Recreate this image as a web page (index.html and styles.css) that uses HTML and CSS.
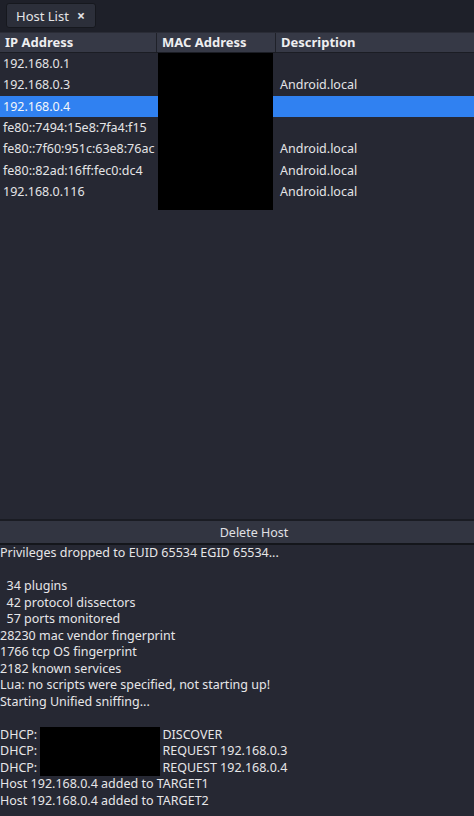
FILE: index.html
```html
<!DOCTYPE html>
<html>
<head>
<meta charset="utf-8">
<link rel="stylesheet" href="styles.css">
</head>
<body>
<div class="app">
  <div class="topbar">
    <div class="tab"><span class="tab-label">Host List</span><span class="tab-close">×</span></div>
  </div>
  <div class="table">
    <div class="thead">
      <div class="th c1">IP Address</div>
      <div class="th c2">MAC Address</div>
      <div class="th c3">Description</div>
    </div>
    <div class="tbody">
      <div class="row"><div class="td c1">192.168.0.1</div><div class="td c2"></div><div class="td c3"></div></div>
      <div class="row"><div class="td c1">192.168.0.3</div><div class="td c2"></div><div class="td c3">Android.local</div></div>
      <div class="row sel"><div class="td c1">192.168.0.4</div><div class="td c2"></div><div class="td c3"></div></div>
      <div class="row"><div class="td c1">fe80::7494:15e8:7fa4:f15</div><div class="td c2"></div><div class="td c3"></div></div>
      <div class="row"><div class="td c1">fe80::7f60:951c:63e8:76ac</div><div class="td c2"></div><div class="td c3">Android.local</div></div>
      <div class="row"><div class="td c1">fe80::82ad:16ff:fec0:dc4</div><div class="td c2"></div><div class="td c3">Android.local</div></div>
      <div class="row"><div class="td c1">192.168.0.116</div><div class="td c2"></div><div class="td c3">Android.local</div></div>
      <div class="redact-mac"></div>
    </div>
  </div>
  <div class="actionbar"><span>Delete Host</span></div>
  <div class="log">
    <div class="log-inner">
<div class="line">Privileges dropped to EUID 65534 EGID 65534...</div>
<div class="line">&nbsp;</div>
<div class="line">  34 plugins</div>
<div class="line">  42 protocol dissectors</div>
<div class="line">  57 ports monitored</div>
<div class="line">28230 mac vendor fingerprint</div>
<div class="line">1766 tcp OS fingerprint</div>
<div class="line">2182 known services</div>
<div class="line">Lua: no scripts were specified, not starting up!</div>
<div class="line">Starting Unified sniffing...</div>
<div class="line">&nbsp;</div>
<div class="line">DHCP: <span class="redact"></span>DISCOVER</div>
<div class="line">DHCP: <span class="redact"></span>REQUEST 192.168.0.3</div>
<div class="line">DHCP: <span class="redact"></span>REQUEST 192.168.0.4</div>
<div class="line">Host 192.168.0.4 added to TARGET1</div>
<div class="line">Host 192.168.0.4 added to TARGET2</div>
    </div>
  </div>
</div>
</body>
</html>
```

FILE: styles.css
```css
html, body {
  margin: 0;
  padding: 0;
  background: #262833;
}
body {
  font-family: "Noto Sans", "Open Sans", sans-serif;
  font-size: 12.5px;
  color: #e4e4e6;
}
.app {
  width: 474px;
  height: 816px;
  display: flex;
  flex-direction: column;
  overflow: hidden;
}
.topbar {
  height: 32px;
  box-sizing: border-box;
  background: #1e2029;
  padding: 3px 6px 4px;
  display: flex;
  align-items: stretch;
}
.tab {
  display: flex;
  align-items: center;
  gap: 8px;
  padding: 0 10px 0 9px;
  background: #2c2f3a;
  border: 1px solid #16181e;
  border-radius: 3px;
  font-size: 13px;
  color: #e4e4e6;
}
.tab-close {
  font-weight: bold;
  font-size: 14px;
  line-height: 1;
}
.table {
  flex: 1;
  display: flex;
  flex-direction: column;
  background: #262833;
}
.thead {
  display: flex;
  height: 21px;
  box-sizing: border-box;
  background: #363946;
  border-top: 1px solid #2a2c36;
  border-bottom: 1px solid #1b1d24;
}
.th {
  font-weight: bold;
  font-size: 13px;
  color: #eeeef0;
  padding-left: 5px;
  line-height: 19px;
  box-sizing: border-box;
  border-right: 1px solid #1f2129;
}
.c1 { width: 157px; flex: none; }
.c2 { width: 119px; flex: none; }
.c3 { flex: 1; border-right: none; }
.tbody {
  position: relative;
}
.row {
  display: flex;
  height: 21.33px;
}
.td {
  line-height: 22px;
  white-space: nowrap;
  overflow: hidden;
  box-sizing: border-box;
}
.td.c1 { padding-left: 3px; }
.td.c3 { padding-left: 4px; }
.row.sel { background: #3081f1; color: #f4f6fa; }
.redact-mac {
  position: absolute;
  left: 158px;
  top: 0;
  width: 115px;
  height: 157px;
  background: #000;
}
.actionbar {
  height: 26px;
  box-sizing: border-box;
  background: #323541;
  border-top: 2px solid #1a1c23;
  border-bottom: 2px solid #14161b;
  display: flex;
  align-items: center;
  justify-content: center;
  padding-left: 34px;
  color: #e0e0e4;
  font-size: 12.5px;
}
.log {
  height: 271px;
  flex: none;
  overflow: hidden;
  background: #262833;
}
.log-inner {
  margin-top: 0;
}
.line {
  height: 16.5px;
  line-height: 16.5px;
  white-space: pre;
  color: #e6e6e8;
}
.redact {
  display: inline-block;
  vertical-align: top;
  width: 120px;
  height: 16.5px;
  background: #000;
  margin-left: 0;
  margin-right: 2px;
}
```
